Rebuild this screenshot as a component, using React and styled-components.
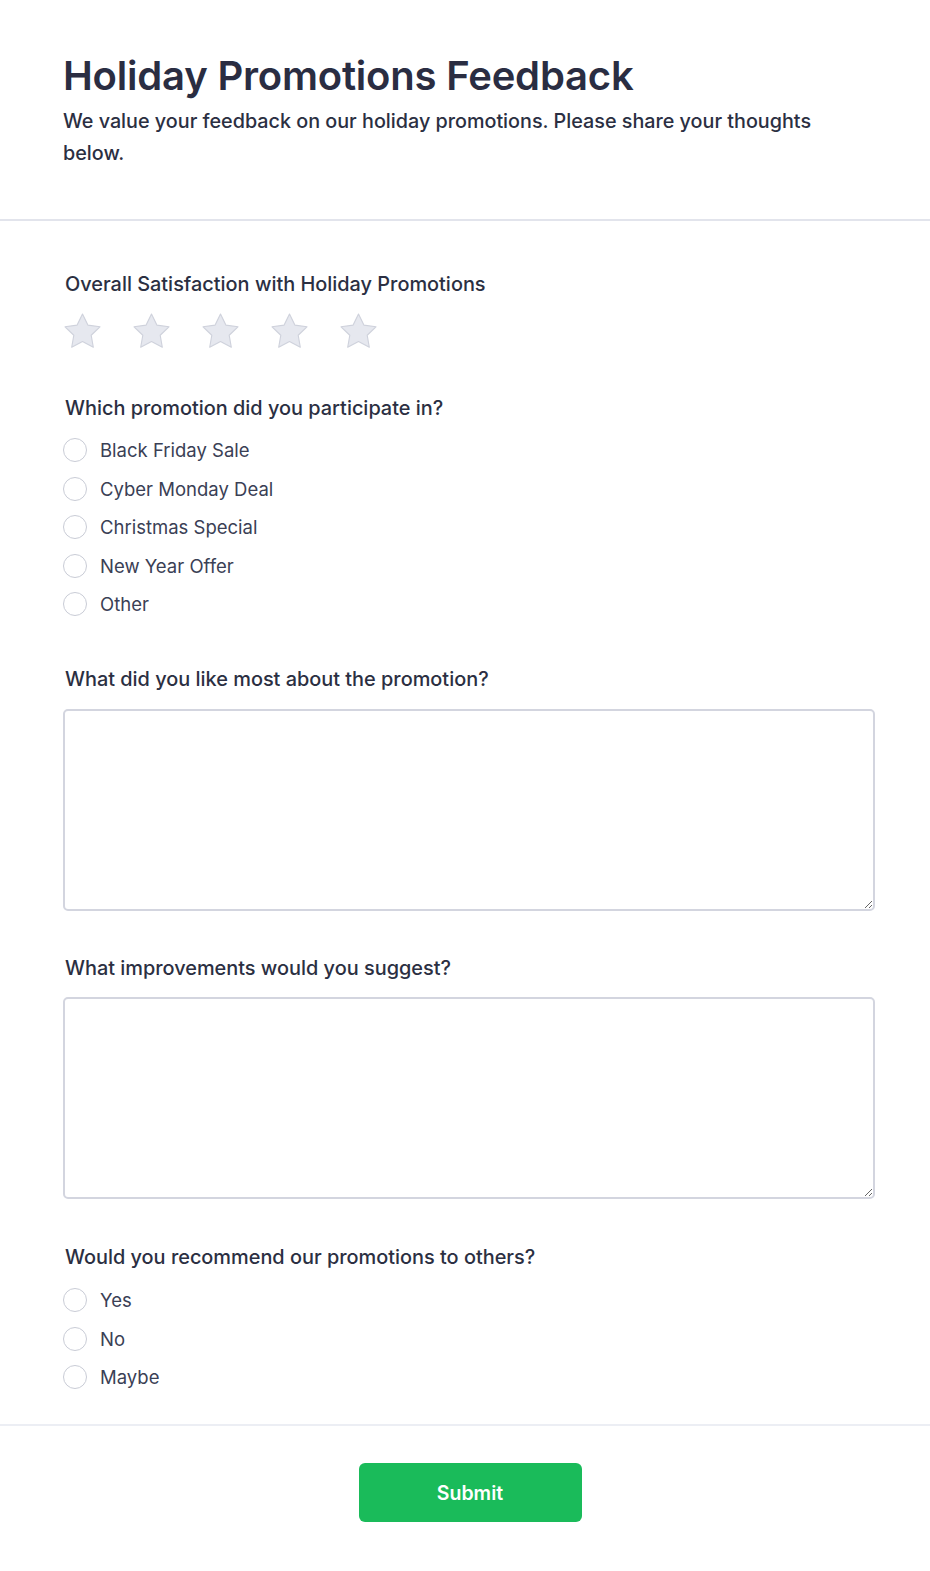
import React, { useState } from "react";
import styled, { createGlobalStyle } from "styled-components";

const GlobalStyles = createGlobalStyle`
  body {
    margin: 0;
    background: #ffffff;
    font-family: Inter, "Noto Sans", sans-serif;
    color: #2b2f42;
  }
  * { box-sizing: border-box; }
`;

const Page = styled.div`
  width: 930px;
  background: #fff;
`;

const Header = styled.header`
  padding: 50px 63px 50px;
  border-bottom: 2px solid #e2e4ec;
`;

const Title = styled.h1`
  margin: 0;
  font-size: 40px;
  line-height: 52px;
  font-weight: 600;
  color: #2a2d42;
  letter-spacing: -0.2px;
`;

const Subtitle = styled.p`
  margin: 3px 0 0;
  font-size: 19.75px;
  line-height: 32px;
  font-weight: 500;
  color: #2b2f42;
  max-width: 780px;
`;

const Body = styled.form`
  padding: 49px 55px 30px 63px;
  border-bottom: 2px solid #eceef4;
  display: flex;
  flex-direction: column;
  gap: 43px;
`;

const Section = styled.div`
  display: flex;
  flex-direction: column;
  margin-bottom: ${({ $extra }) => $extra || 0}px;
`;

const Label = styled.div`
  padding-left: 2px;
  font-size: 19.9px;
  line-height: 28px;
  font-weight: 500;
  color: #2b2f42;
  margin-bottom: ${({ $gap }) => $gap || 12}px;
`;

const Stars = styled.div`
  display: flex;
  gap: 30px;
`;

const StarButton = styled.button`
  border: 0;
  background: none;
  padding: 0;
  width: 39px;
  height: 39px;
  cursor: pointer;
  svg { display: block; }
`;

const Options = styled.div`
  display: flex;
  flex-direction: column;
  gap: 14.5px;
`;

const Option = styled.label`
  display: flex;
  align-items: center;
  gap: 13px;
  font-size: 18.5px;
  line-height: 24px;
  color: #3a4055;
  cursor: pointer;
`;

const Radio = styled.span`
  width: 24px;
  height: 24px;
  border-radius: 50%;
  border: 1.5px solid #c9ccd6;
  background: #fff;
  flex-shrink: 0;
  display: flex;
  align-items: center;
  justify-content: center;
  &::after {
    content: "";
    width: 12px;
    height: 12px;
    border-radius: 50%;
    background: ${({ $on }) => ($on ? "#1abb5a" : "transparent")};
  }
`;

const HiddenInput = styled.input`
  display: none;
`;

const TextArea = styled.textarea`
  width: 812px;
  height: 202px;
  border: 2px solid #d3d5df;
  border-radius: 5px;
  padding: 12px;
  font-family: inherit;
  font-size: 18px;
  resize: vertical;
  outline: none;
`;

const Footer = styled.div`
  display: flex;
  justify-content: center;
  padding: 37px 0 52px;
`;

const SubmitButton = styled.button`
  width: 223px;
  height: 59px;
  margin-left: 10px;
  border: 0;
  border-radius: 6px;
  background: #1abb5a;
  color: #fff;
  font-family: inherit;
  font-size: 19.5px;
  font-weight: 600;
  cursor: pointer;
`;

const Star = ({ filled }) => (
  <svg width="39" height="39" viewBox="0 0 24 24">
    <path
      d="M12 1.3l3.3 6.75 7.45 1.05-5.4 5.2 1.3 7.4L12 18.2l-6.65 3.5 1.3-7.4-5.4-5.2 7.45-1.05z"
      fill={filled ? "#f5b700" : "#e6e8ef"}
      stroke={filled ? "#e0a800" : "#cfd2dc"}
      strokeWidth="0.7"
      strokeLinejoin="round"
    />
  </svg>
);

const RadioGroup = ({ name, options, value, onChange }) => (
  <Options>
    {options.map((o) => (
      <Option key={o}>
        <HiddenInput type="radio" name={name} checked={value === o} onChange={() => onChange(o)} />
        <Radio $on={value === o} />
        {o}
      </Option>
    ))}
  </Options>
);

export default function App() {
  const [rating, setRating] = useState(0);
  const [promo, setPromo] = useState(null);
  const [rec, setRec] = useState(null);

  return (
    <Page>
      <GlobalStyles />
      <Header>
        <Title>Holiday Promotions Feedback</Title>
        <Subtitle>
          We value your feedback on our holiday promotions. Please share your thoughts below.
        </Subtitle>
      </Header>
      <Body onSubmit={(e) => e.preventDefault()}>
        <Section>
          <Label $gap={14}>Overall Satisfaction with Holiday Promotions</Label>
          <Stars>
            {[1, 2, 3, 4, 5].map((n) => (
              <StarButton type="button" key={n} onClick={() => setRating(n)}>
                <Star filled={n <= rating} />
              </StarButton>
            ))}
          </Stars>
        </Section>
        <Section $extra={6}>
          <Label $gap={16}>Which promotion did you participate in?</Label>
          <RadioGroup
            name="promo"
            options={["Black Friday Sale", "Cyber Monday Deal", "Christmas Special", "New Year Offer", "Other"]}
            value={promo}
            onChange={setPromo}
          />
        </Section>
        <Section>
          <Label $gap={16}>What did you like most about the promotion?</Label>
          <TextArea />
        </Section>
        <Section $extra={1}>
          <Label $gap={15}>What improvements would you suggest?</Label>
          <TextArea />
        </Section>
        <Section $extra={5}>
          <Label $gap={17}>Would you recommend our promotions to others?</Label>
          <RadioGroup name="rec" options={["Yes", "No", "Maybe"]} value={rec} onChange={setRec} />
        </Section>
      </Body>
      <Footer>
        <SubmitButton type="submit">Submit</SubmitButton>
      </Footer>
    </Page>
  );
}
